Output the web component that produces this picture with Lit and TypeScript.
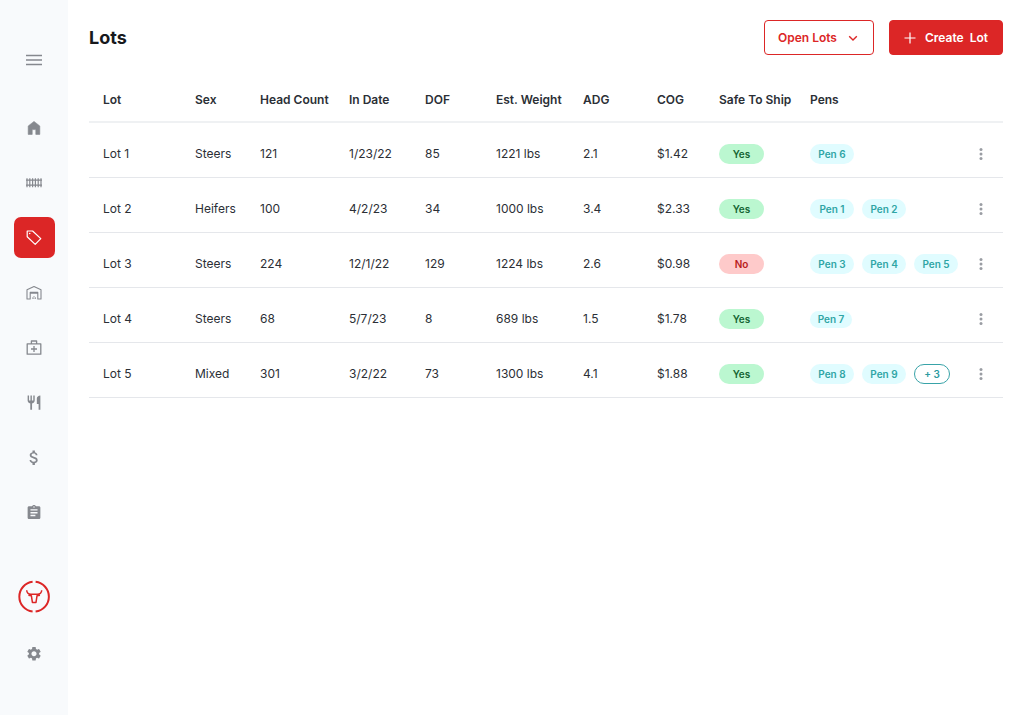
import { LitElement, html, css, svg } from "lit";
import { customElement, property, state } from "lit/decorators.js";
import { classMap } from "lit/directives/class-map.js";

interface Lot {
  name: string;
  sex: string;
  head: number;
  date: string;
  dof: number;
  weight: string;
  adg: string;
  cog: string;
  safe: boolean;
  pens: string[];
  more?: number;
  compact?: boolean;
}

const LOTS: Lot[] = [
  { name: "Lot 1", sex: "Steers", head: 121, date: "1/23/22", dof: 85, weight: "1221 lbs", adg: "2.1", cog: "$1.42", safe: true, pens: ["Pen 6"] },
  { name: "Lot 2", sex: "Heifers", head: 100, date: "4/2/23", dof: 34, weight: "1000 lbs", adg: "3.4", cog: "$2.33", safe: true, pens: ["Pen 1", "Pen 2"] },
  { name: "Lot 3", sex: "Steers", head: 224, date: "12/1/22", dof: 129, weight: "1224 lbs", adg: "2.6", cog: "$0.98", safe: false, pens: ["Pen 3", "Pen 4", "Pen 5"] },
  { name: "Lot 4", sex: "Steers", head: 68, date: "5/7/23", dof: 8, weight: "689 lbs", adg: "1.5", cog: "$1.78", safe: true, pens: ["Pen 7"], compact: true },
  { name: "Lot 5", sex: "Mixed", head: 301, date: "3/2/22", dof: 73, weight: "1300 lbs", adg: "4.1", cog: "$1.88", safe: true, pens: ["Pen 8", "Pen 9"], more: 3 },
];

// Each glyph is drawn in an 18 x 18 box.
const material = (d: string, transform = "translate(.5 .2) scale(.7083)") =>
  svg`<path transform=${transform} fill="currentColor" d=${d} />`;

const ICONS: Record<string, unknown> = {
  menu: svg`<path d="M1 4.5h16M1 9h16M1 13.5h16" fill="none" stroke="currentColor" stroke-width="1.3" />`,
  home: svg`<path fill="currentColor" d="M9 2.4 3.2 7v8.400h4V10.600h3.600v4.800h4V7z" stroke="currentColor" stroke-width=".6" stroke-linejoin="round" />`,
  fence: svg`<path d="M1 6.2h16M1 11.200h16M2 4.200v9M4.800 4.200v9M7.600 4.200v9M10.400 4.200v9M13.200 4.200v9M16 4.200v9" fill="none" stroke="currentColor" stroke-width="1.2" />`,
  tag: svg`<path d="M2.200 2h5.400l8.200 7.600-5.600 5.800-8-7.600z" fill="none" stroke="currentColor" stroke-width="1.2" stroke-linejoin="round" /><circle cx="4.700" cy="4.500" r=".8" fill="currentColor" />`,
  barn: svg`<path d="M2 15V5.700L9 2.500l7 3.200V15h-3.200V8.400H5.200V15zM5.200 9.100h7.600M8 15v-1.800M10.200 15v-1.800M9 11.900v.8" fill="none" stroke="currentColor" stroke-width="1.1" stroke-linejoin="round" />`,
  medical: svg`<path d="M2.200 4.800h13.600v10.400H2.200zM6.400 4.600V2h5.200v2.600M9 7v6M6 10h6" fill="none" stroke="currentColor" stroke-width="1.3" stroke-linejoin="round" />`,
  feed: material("M11 9H9V2H7v7H5V2H3v7c0 2.12 1.66 3.84 3.75 3.97V22h2.5v-9.03C11.34 12.84 13 11.12 13 9V2h-2v7zm5-3v8h2.5v8H21V2c-2.76 0-5 2.24-5 4z"),
  money: material("M11.8 10.9c-2.27-.59-3-1.2-3-2.15 0-1.09 1.01-1.85 2.7-1.85 1.78 0 2.44.85 2.5 2.1h2.21c-.07-1.72-1.12-3.3-3.21-3.81V3h-3v2.16c-1.94.42-3.5 1.68-3.5 3.61 0 2.31 1.91 3.46 4.7 4.13 2.5.6 3 1.48 3 2.41 0 .69-.49 1.79-2.7 1.79-2.06 0-2.87-.92-2.98-2.1h-2.2c.12 2.19 1.76 3.42 3.68 3.83V21h3v-2.15c1.95-.37 3.5-1.5 3.5-3.55 0-2.84-2.43-3.81-4.7-4.4z", "translate(-.5 -.9) scale(.8)"),
  reports: material("M19 3h-4.18C14.4 1.84 13.3 1 12 1c-1.3 0-2.4.84-2.82 2H5c-1.1 0-2 .9-2 2v14c0 1.1.9 2 2 2h14c1.1 0 2-.9 2-2V5c0-1.1-.9-2-2-2zm-7 0c.55 0 1 .45 1 1s-.45 1-1 1-1-.45-1-1 .45-1 1-1zm2 14H7v-2h7v2zm3-4H7v-2h10v2zm0-4H7V7h10v2z"),
  settings: material("M19.14 12.94c.04-.3.06-.61.06-.94 0-.32-.02-.64-.07-.94l2.03-1.58c.18-.14.23-.41.12-.61l-1.92-3.32c-.12-.22-.37-.29-.59-.22l-2.39.96c-.5-.38-1.03-.7-1.62-.94l-.36-2.54c-.04-.24-.24-.41-.48-.41h-3.84c-.24 0-.43.17-.47.41l-.36 2.54c-.59.24-1.13.57-1.62.94l-2.39-.96c-.22-.08-.47 0-.59.22L2.74 8.87c-.12.21-.08.47.12.61l2.03 1.58c-.05.3-.09.63-.09.94s.02.64.07.94l-2.03 1.58c-.18.14-.23.41-.12.61l1.92 3.32c.12.22.37.29.59.22l2.39-.96c.5.38 1.03.7 1.62.94l.36 2.54c.05.24.24.41.48.41h3.84c.24 0 .44-.17.47-.41l.36-2.54c.59-.24 1.13-.56 1.62-.94l2.39.96c.22.08.47 0 .59-.22l1.92-3.32c.12-.22.07-.47-.12-.61l-2.01-1.58zM12 15.6c-1.98 0-3.6-1.62-3.6-3.6s1.62-3.6 3.6-3.6 3.6 1.62 3.6 3.6-1.62 3.6-3.6 3.6z"),
  plus: svg`<path d="M9 3.5v11M3.5 9h11" fill="none" stroke="currentColor" stroke-width="1.2" />`,
  chevron: svg`<path d="m5.200 7.200 3.800 3.800 3.800-3.800" fill="none" stroke="currentColor" stroke-width="1.4" />`,
  more: svg`<g fill="currentColor"><circle cx="9" cy="4.600" r="1.500" /><circle cx="9" cy="9" r="1.500" /><circle cx="9" cy="13.400" r="1.500" /></g>`,
};

@customElement("ranch-icon")
export class RanchIcon extends LitElement {
  @property() name = "";

  static styles = css`
    :host {
      display: block;
      width: 18px;
      height: 18px;
    }
    .glyph {
      display: block;
      width: 100%;
      height: 100%;
    }
  `;

  render() {
    return html`<svg class="glyph" viewBox="0 0 18 18" aria-hidden="true">${ICONS[this.name]}</svg>`;
  }
}

@customElement("ranch-sidebar")
export class RanchSidebar extends LitElement {
  @state() private active = "tag";

  static styles = css`
    :host {
      display: flex;
      flex-direction: column;
      align-items: center;
      box-sizing: border-box;
      padding: 39px 0 40px;
      background: #f8fafc;
      color: #85888e;
    }
    .menu,
    .item {
      display: grid;
      place-items: center;
      width: 41px;
      height: 41px;
      padding: 0;
      border: 0;
      border-radius: 7px;
      background: none;
      color: inherit;
      cursor: pointer;
    }
    .nav {
      display: flex;
      flex-direction: column;
      gap: 14px;
      margin: 27px 0 47px;
    }
    .active {
      background: #dc2626;
      color: #fff;
    }
    .brand {
      display: block;
      color: #dc2626;
      margin-bottom: 19px;
    }
    .logo {
      display: block;
      width: 34px;
      height: 34px;
    }
  `;

  render() {
    const items = [
      ["home", "Home"],
      ["fence", "Pens"],
      ["tag", "Lots"],
      ["barn", "Barn"],
      ["medical", "Health"],
      ["feed", "Feed"],
      ["money", "Finance"],
      ["reports", "Reports"],
    ];
    return html`
      <button class="menu" aria-label="Menu"><ranch-icon name="menu"></ranch-icon></button>
      <nav class="nav">
        ${items.map(
          ([icon, label]) => html`
            <a
              href="#${icon}"
              aria-label=${label}
              class=${classMap({ item: true, active: this.active === icon })}
              @click=${() => (this.active = icon)}
              ><ranch-icon name=${icon}></ranch-icon
            ></a>
          `
        )}
      </nav>
      <a class="brand" href="#account" aria-label="Account">
        <svg class="logo" viewBox="0 0 34 34" fill="none" stroke="currentColor" aria-hidden="true">
          <path stroke-width="2" d="M15.600 1.800A15 15 0 0 0 15.600 31.600M18.600 1.800A15 15 0 0 1 18.600 31.600" />
          <path stroke-width="1.500" stroke-linejoin="round" d="M9.700 10.200c.2 3 1.700 4 4.300 4h6.400c2.600 0 4.100-1 4.300-4M11.400 15.200l3 .6 1 6.600h3.600l1-6.600 3-.6" />
        </svg>
      </a>
      <button class="item" aria-label="Settings"><ranch-icon name="settings"></ranch-icon></button>
    `;
  }
}

@customElement("lots-table")
export class LotsTable extends LitElement {
  @property({ attribute: false }) lots: Lot[] = [];

  static styles = css`
    :host {
      display: block;
    }
    .table {
      width: 100%;
      table-layout: fixed;
      border-collapse: separate;
      border-spacing: 0;
      font-size: 12px;
      line-height: 20px;
      color: #2b2f36;
    }
    .lot { width: 92px; }
    .sex { width: 65px; }
    .head { width: 89px; }
    .date { width: 76px; }
    .dof { width: 71px; }
    .weight { width: 87px; }
    .adg { width: 74px; }
    .cog { width: 62px; }
    .safe { width: 91px; }
    .pens { width: 162px; }
    .menu { width: 31px; }
    .th,
    .td {
      padding: 0;
      text-align: left;
      white-space: nowrap;
      border-bottom: 1px solid #e5e7eb;
    }
    .th {
      padding: 14px 0 11px;
      font-weight: 600;
      border-bottom: 2px solid #eff1f3;
    }
    .td {
      padding: 21px 0 13px;
    }
    .th:first-child,
    .td:first-child {
      padding-left: 14px;
    }
    .pill {
      display: inline-flex;
      align-items: center;
      justify-content: center;
      box-sizing: border-box;
      min-width: 45px;
      height: 20px;
      padding: 0 7px;
      border: 0;
      border-radius: 10px;
      font: 600 10px/16px Inter, sans-serif;
    }
    .yes {
      background: #bbf7d0;
      color: #166534;
    }
    .no {
      background: #fecaca;
      color: #b91c1c;
    }
    .list {
      display: flex;
      align-items: center;
      gap: 8px;
      height: 20px;
    }
    .flag {
      display: flex;
    }
    .pen {
      min-width: 44px;
      background: #e0fcff;
      color: #2fa5a5;
    }
    .compact {
      min-width: 42px;
      height: 17px;
      padding: 0 6px;
    }
    .extra {
      min-width: 36px;
      border: 1px solid #38a3a8;
      background: #fff;
      color: #2c9a9f;
      cursor: pointer;
    }
    .more {
      display: block;
      padding: 1px 0;
      margin: 0;
      height: 20px;
      border: 0;
      background: none;
      color: #9a9da3;
      cursor: pointer;
    }
  `;

  render() {
    const columns = [
      ["lot", "Lot"],
      ["sex", "Sex"],
      ["head", "Head Count"],
      ["date", "In Date"],
      ["dof", "DOF"],
      ["weight", "Est. Weight"],
      ["adg", "ADG"],
      ["cog", "COG"],
      ["safe", "Safe To Ship"],
      ["pens", "Pens"],
    ];
    return html`
      <table class="table">
        <thead>
          <tr>
            ${columns.map(([key, label]) => html`<th class="th ${key}" scope="col">${label}</th>`)}
            <th class="th menu" aria-label="Actions"></th>
          </tr>
        </thead>
        <tbody>
          ${this.lots.map(
            (lot) => html`
              <tr>
                <td class="td">${lot.name}</td>
                <td class="td">${lot.sex}</td>
                <td class="td">${lot.head}</td>
                <td class="td">${lot.date}</td>
                <td class="td">${lot.dof}</td>
                <td class="td">${lot.weight}</td>
                <td class="td">${lot.adg}</td>
                <td class="td">${lot.cog}</td>
                <td class="td">
                  <div class="flag"><span class="pill ${lot.safe ? "yes" : "no"}">${lot.safe ? "Yes" : "No"}</span></div>
                </td>
                <td class="td">
                  <div class="list">
                    ${lot.pens.map(
                      (pen) => html`<span class=${classMap({ pill: true, pen: true, compact: !!lot.compact })}>${pen}</span>`
                    )}
                    ${lot.more ? html`<button class="pill extra">+ ${lot.more}</button>` : ""}
                  </div>
                </td>
                <td class="td">
                  <button class="more" aria-label="Actions for ${lot.name}"><ranch-icon name="more"></ranch-icon></button>
                </td>
              </tr>
            `
          )}
        </tbody>
      </table>
    `;
  }
}

@customElement("app-root")
export class AppRoot extends LitElement {
  static styles = css`
    :host {
      display: grid;
      grid-template-columns: 68px minmax(0, 1fr);
      min-height: 100vh;
      background: #fff;
      font-family: Inter, sans-serif;
      color: #17191d;
    }
    .main {
      padding: 20px 21px;
    }
    .header {
      display: flex;
      align-items: center;
      gap: 15px;
      margin-bottom: 21px;
    }
    .title {
      flex: 1;
      margin: 0;
      font-size: 18px;
      line-height: 24px;
      font-weight: 700;
    }
    .filter {
      display: grid;
      align-items: center;
      color: #dc2626;
    }
    .select,
    .create {
      box-sizing: border-box;
      height: 35px;
      margin: 0;
      border: 1px solid #dc2626;
      border-radius: 4px;
      font: 600 12px/20px Inter, sans-serif;
      cursor: pointer;
    }
    .select {
      grid-area: 1 / 1;
      appearance: none;
      width: 110px;
      padding: 0 32px 0 13px;
      background: #fff;
      color: #dc2626;
    }
    .chevron {
      grid-area: 1 / 1;
      justify-self: end;
      margin-right: 12px;
      pointer-events: none;
    }
    .create {
      display: flex;
      align-items: center;
      gap: 6px;
      padding: 0 14px 0 11px;
      background: #dc2626;
      color: #fff;
      white-space: pre;
    }
  `;

  render() {
    return html`
      <ranch-sidebar></ranch-sidebar>
      <main class="main">
        <header class="header">
          <h1 class="title">Lots</h1>
          <div class="filter">
            <select class="select" aria-label="Lot status">
              <option>Open Lots</option>
              <option>Closed Lots</option>
            </select>
            <ranch-icon class="chevron" name="chevron"></ranch-icon>
          </div>
          <button class="create"><ranch-icon name="plus"></ranch-icon>Create  Lot</button>
        </header>
        <lots-table .lots=${LOTS}></lots-table>
      </main>
    `;
  }
}
